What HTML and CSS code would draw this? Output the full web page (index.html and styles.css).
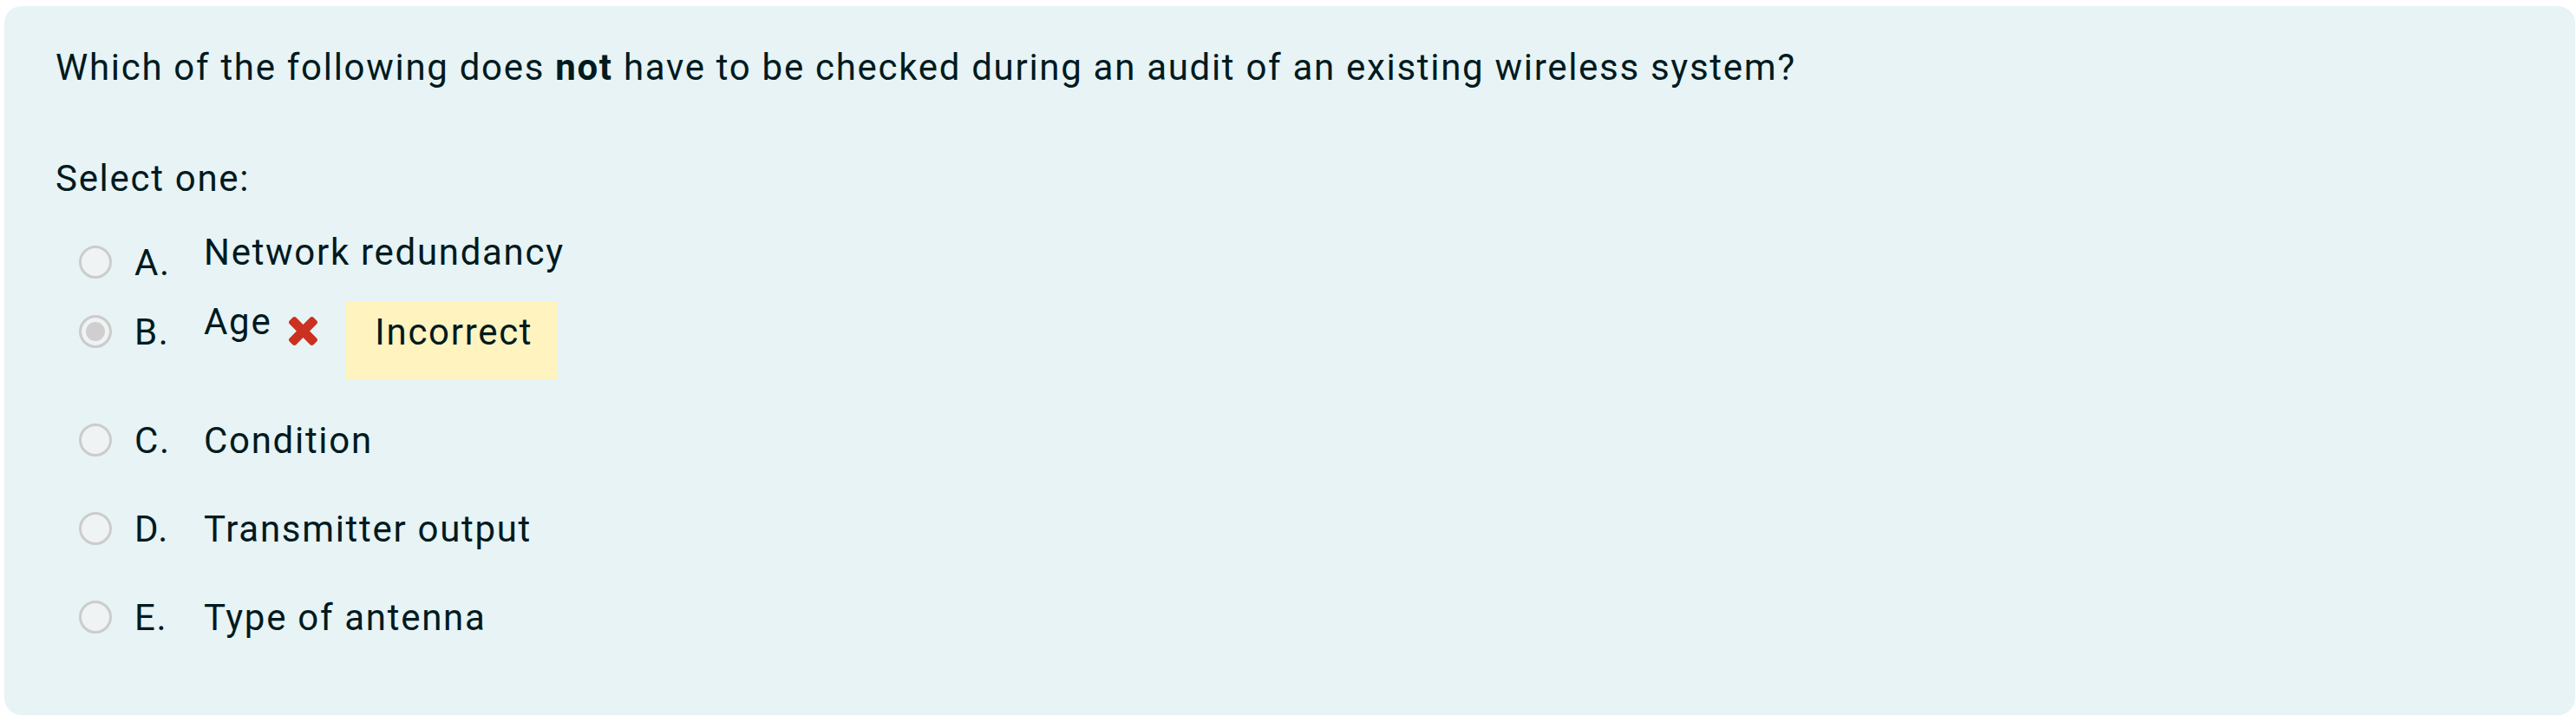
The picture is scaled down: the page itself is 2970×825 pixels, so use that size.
FILE: index.html
```html
<!DOCTYPE html>
<html lang="en">
<head>
<meta charset="utf-8">
<title>Question</title>
<link rel="stylesheet" href="styles.css">
</head>
<body>
<div class="formulation">
  <div class="qtext">Which of the following does <strong>not</strong> have to be checked during an audit of an existing wireless system?</div>
  <div class="prompt">Select one:</div>
  <div class="answers">
    <div class="opt opt-a">
      <span class="radio"></span>
      <span class="letter">A.</span>
      <span class="ans raised">Network redundancy</span>
    </div>
    <div class="opt opt-b">
      <span class="radio checked"></span>
      <span class="letter">B.</span>
      <span class="ans raised">Age</span>
      <svg class="icon-x" viewBox="0 14 1188 1188" aria-hidden="true"><path d="M1188 246q0 -40 -28 -68l-136 -136q-28 -28 -68 -28t-68 28l-294 294l-294 -294q-28 -28 -68 -28t-68 28l-136 136q-28 28 -28 68t28 68l294 294l-294 294q-28 28 -28 68t28 68l136 136q28 28 68 28t68 -28l294 -294l294 294q28 28 68 28t68 -28l136 -136q28 -28 28 -68t-28 -68l-294 -294l294 -294q28 -28 28 -68z"/></svg>
      <span class="feedback">Incorrect</span>
    </div>
    <div class="opt">
      <span class="radio"></span>
      <span class="letter">C.</span>
      <span class="ans">Condition</span>
    </div>
    <div class="opt">
      <span class="radio"></span>
      <span class="letter">D.</span>
      <span class="ans">Transmitter output</span>
    </div>
    <div class="opt opt-last">
      <span class="radio"></span>
      <span class="letter">E.</span>
      <span class="ans">Type of antenna</span>
    </div>
  </div>
</div>
</body>
</html>
```

FILE: styles.css
```css
html, body {
  margin: 0;
  padding: 0;
  background: #ffffff;
}

body {
  font-family: Roboto, "Liberation Sans", sans-serif;
  font-size: 42px;
  line-height: 50px;
  letter-spacing: 1.7px;
  color: #001a1e;
}

.formulation {
  margin: 7px 0 0 5px;
  width: 2964px;
  box-sizing: border-box;
  padding: 46px 0 87px 59px;
  background: #e7f3f5;
  border-radius: 20px;
}

.qtext {
  margin-bottom: 78px;
}

.qtext strong {
  font-weight: 700;
}

.prompt {
  margin-bottom: 47px;
}

.answers {
  display: flex;
  flex-direction: column;
}

.opt {
  display: flex;
  align-items: flex-start;
  padding-bottom: 52px;
}

.opt-a {
  padding-bottom: 30px;
}

.opt-b {
  padding-bottom: 46px;
}

.opt-last {
  padding-bottom: 0;
}

.radio {
  flex: none;
  width: 38px;
  height: 38px;
  box-sizing: border-box;
  margin: 5px 26px 0 27px;
  border: 3px solid #cccccc;
  border-radius: 50%;
  background: #eff3f4;
}

.radio.checked {
  background: #cfcfcf;
  box-shadow: inset 0 0 0 5px #eff3f4;
}

.letter {
  flex: none;
  width: 80px;
}

.ans.raised {
  margin-top: -12px;
}

.icon-x {
  flex: none;
  width: 33px;
  height: 33px;
  margin: 7px 0 0 20px;
  fill: #ca3120;
}

.feedback {
  flex: none;
  margin: -11px 0 0 32px;
  padding: 11px 29px 29px 34px;
  background: #fff3bf;
}
```
